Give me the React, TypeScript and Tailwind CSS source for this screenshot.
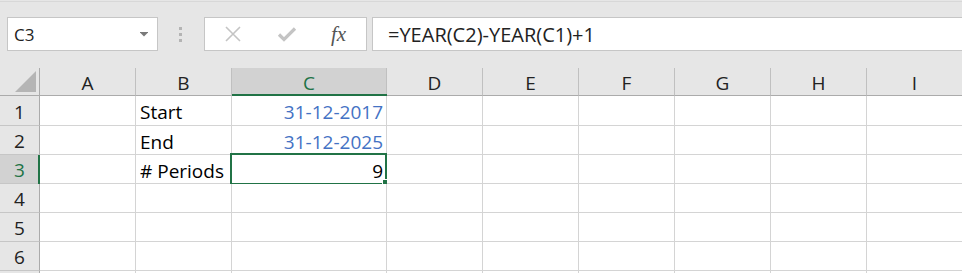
import React from "react";

const columns = [
  { label: "A", width: "w-[96px]" },
  { label: "B", width: "w-[96px]" },
  { label: "C", width: "w-[155px]" },
  { label: "D", width: "w-[96px]" },
  { label: "E", width: "w-[96px]" },
  { label: "F", width: "w-[96px]" },
  { label: "G", width: "w-[96px]" },
  { label: "H", width: "w-[96px]" },
  { label: "I", width: "w-[96px]" },
];

type Cell = { text: string; align?: "left" | "right"; color?: string };

// row 7 only peeks in at the bottom edge, so it has no label
const rows: { n: number; label: string; height: string; cells: Record<string, Cell> }[] = [
  {
    n: 1,
    label: "1",
    height: "h-[30px]",
    cells: {
      B: { text: "Start" },
      C: { text: "31-12-2017", align: "right", color: "text-[#4472c4]" },
    },
  },
  {
    n: 2,
    label: "2",
    height: "h-[29px]",
    cells: {
      B: { text: "End" },
      C: { text: "31-12-2025", align: "right", color: "text-[#4472c4]" },
    },
  },
  {
    n: 3,
    label: "3",
    height: "h-[29px]",
    cells: {
      B: { text: "# Periods" },
      C: { text: "9", align: "right" },
    },
  },
  { n: 4, label: "4", height: "h-[29px]", cells: {} },
  { n: 5, label: "5", height: "h-[29px]", cells: {} },
  { n: 6, label: "6", height: "h-[29px]", cells: {} },
  { n: 7, label: "", height: "h-[29px]", cells: {} },
];

const font = "font-['Open_Sans',sans-serif]";

function Toolbar() {
  return (
    <div className="h-[67px] mt-px border-t border-[#d8d8d8] pt-[15px]">
      <div className="flex items-center h-[34px]">
        {/* Name box */}
        <div className="ml-[7px] w-[151px] h-[34px] bg-white border border-[#c6c6c6] flex items-center justify-between pl-[6px] pr-[9px]">
          <span className="text-[17px] text-[#222] leading-none">C3</span>
          <svg width="8" height="5" viewBox="0 0 8 5">
            <rect x="0" y="0" width="8" height="1" fill="#7a7a7a" />
            <path d="M0.5 1 L7.5 1 L4 4.5 Z" fill="#7a7a7a" />
          </svg>
        </div>

        {/* grip dots */}
        <div className="ml-[21px] w-[3px] flex flex-col gap-[3px]">
          <span className="w-[3px] h-[3px] bg-[#b4b4b4]" />
          <span className="w-[3px] h-[3px] bg-[#b4b4b4]" />
          <span className="w-[3px] h-[3px] bg-[#b4b4b4]" />
        </div>

        {/* cancel / enter / fx */}
        <div className="ml-[22px] w-[163px] h-[34px] bg-white border border-[#c6c6c6] flex items-center">
          <svg className="ml-[19px]" width="18" height="18" viewBox="0 0 18 18">
            <path d="M2 2 L16 16 M16 2 L2 16" stroke="#c4c4c4" strokeWidth="1.6" />
          </svg>
          <svg className="ml-[35px]" width="20" height="18" viewBox="0 0 20 18">
            <path d="M2 9.5 L7 14.5 L18 3.5" stroke="#c4c4c4" strokeWidth="3.2" fill="none" />
          </svg>
          <span className="ml-[34px] font-['Liberation_Serif',serif] italic text-[21px] text-[#555] leading-none">
            fx
          </span>
        </div>

        {/* formula */}
        <div className="ml-[5px] flex-1 h-[34px] bg-white border-y border-l border-[#c6c6c6] flex items-center pl-[15px]">
          <span className="text-[20px] text-[#222] leading-none pt-[1px]">=YEAR(C2)-YEAR(C1)+1</span>
        </div>
      </div>
    </div>
  );
}

function HeaderRow() {
  return (
    <div className="flex h-[28px] bg-[#e6e6e6]">
      <div className="relative w-[40px] shrink-0 border-r border-b border-[#ababab]">
        <svg className="absolute right-[3px] bottom-[3px]" width="21" height="21" viewBox="0 0 21 21">
          <path d="M21 0 L21 21 L0 21 Z" fill="#b5b5b5" />
        </svg>
      </div>
      {columns.map((c) => {
        const active = c.label === "C";
        return (
          <div
            key={c.label}
            className={`relative ${c.width} shrink-0 border-r border-r-[#c0c0c0] border-b border-b-[#ababab] flex items-center justify-center pt-[3px] text-[19px] leading-none ${
              active ? "bg-[#d2d2d2] text-[#217346]" : "text-[#222]"
            }`}
          >
            {c.label}
            {active && <div className="absolute left-0 right-[-1px] bottom-[-1px] h-[2px] bg-[#217346]" />}
          </div>
        );
      })}
    </div>
  );
}

export default function App() {
  return (
    <div className={`w-[962px] h-[273px] overflow-hidden bg-[#e6e6e6] ${font}`}>
      <Toolbar />
      <HeaderRow />
      {rows.map((r) => {
        const activeRow = r.n === 3;
        return (
          <div key={r.n} className={`flex ${r.height}`}>
            <div
              className={`relative w-[40px] shrink-0 border-r border-r-[#ababab] border-b border-b-[#c6c6c6] flex items-center justify-center pt-[3px] text-[19px] leading-none ${
                activeRow ? "bg-[#d2d2d2] text-[#217346]" : "bg-[#e6e6e6] text-[#222]"
              }`}
            >
              {r.label}
              {activeRow && <div className="absolute top-0 bottom-[-1px] right-[-1px] w-[2px] bg-[#217346]" />}
            </div>
            {columns.map((c) => {
              const cell = r.cells[c.label];
              const selected = r.n === 3 && c.label === "C";
              return (
                <div
                  key={c.label}
                  className={`relative ${c.width} shrink-0 bg-white border-r border-b border-[#d4d4d4] flex items-center pt-[4px] px-[4px] text-[19px] leading-none ${
                    cell?.align === "right" ? "justify-end pr-[3px]" : "justify-start"
                  } ${cell?.color ?? "text-black"}`}
                >
                  {cell?.text}
                  {selected && (
                    <>
                      <div className="absolute left-[-2px] top-[-2px] right-[-1px] bottom-[-2px] border-2 border-[#217346]" />
                      <div className="absolute left-[150px] top-[24px] w-[8px] h-[8px] bg-[#217346] border border-white" />
                    </>
                  )}
                </div>
              );
            })}
          </div>
        );
      })}
    </div>
  );
}
